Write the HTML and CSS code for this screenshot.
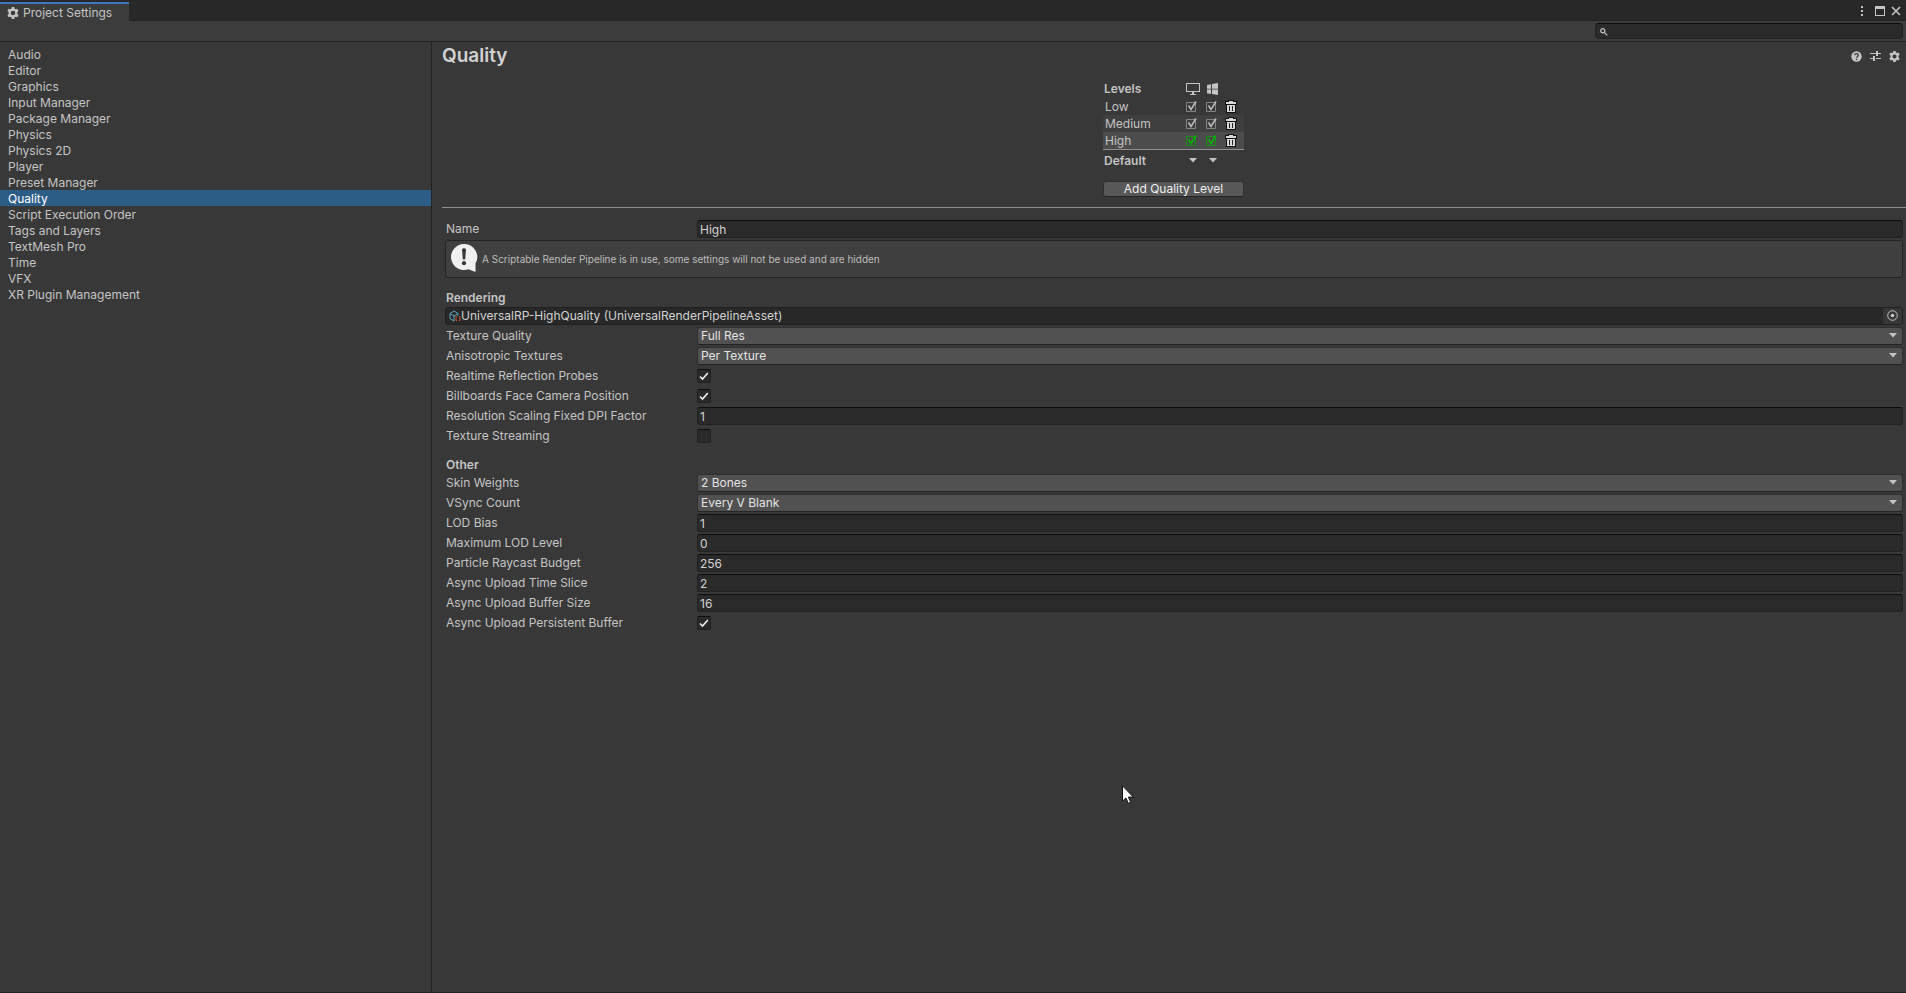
FILE: index.html
```html
<!DOCTYPE html>
<html lang="en">
<head>
  <meta charset="UTF-8" />
  <meta name="viewport" content="width=device-width, initial-scale=1.0" />
  <title>Project Settings</title>
  <link rel="stylesheet" href="styles.css">
</head>
<body>
  <!-- Shared icons -->
  <svg class="sprite" aria-hidden="true">
    <symbol id="gear" viewBox="0 0 24 24">
      <path fill-rule="evenodd" d="M9.5 0h5l.7 3.3 2.3 1.3 3.2-1.1 2.5 4.3-2.5 2.3v3.8l2.5 2.3-2.5 4.3-3.2-1.1-2.3 1.3-.7 3.3h-5l-.7-3.3-2.3-1.3-3.2 1.1-2.5-4.3 2.5-2.3v-3.8L.8 7.800l2.500-4.300 3.200 1.100 2.300-1.300zM12 7.500a4.500 4.500 0 1 0 0 9 4.500 4.500 0 0 0 0-9z" />
    </symbol>
    <symbol id="trash" viewBox="0 0 12 13">
      <path fill="#111" d="M3 0h6v1h3v4h-1v8H1V5H0V1h3z" />
      <path fill="#d8d8d8" d="M4 1h4v1h3v2H1V2h3zM2 5h8v7H2z" />
      <path fill="#222" d="M4 6h1v5H4zM7 6h1v5H7z" />
    </symbol>
  </svg>

  <header class="tabbar">
    <div class="tab">
      <svg class="tab-icon"><use href="#gear" /></svg>
      <span>Project Settings</span>
    </div>
    <div class="window-buttons">
      <button aria-label="Menu"><svg width="11" height="11"><path d="M3 0h2v2H3zM3 4h2v2H3zM3 8h2v2H3z" /></svg></button>
      <button aria-label="Maximize"><svg width="11" height="11"><path fill-rule="evenodd" d="M1 0h10v10H1zM2 3v6h8V3z" /></svg></button>
      <button aria-label="Close"><svg width="11" height="11"><path d="M2 1l8 8M10 1l-8 8" fill="none" stroke="#c4c4c4" stroke-width="1.600" /></svg></button>
    </div>
  </header>

  <div class="toolbar">
    <input class="search" type="search" aria-label="Search settings">
  </div>

  <div class="content">
    <nav class="sidebar">
      <a href="#">Audio</a>
      <a href="#">Editor</a>
      <a href="#">Graphics</a>
      <a href="#">Input Manager</a>
      <a href="#">Package Manager</a>
      <a href="#">Physics</a>
      <a href="#">Physics 2D</a>
      <a href="#">Player</a>
      <a href="#">Preset Manager</a>
      <a href="#" class="active">Quality</a>
      <a href="#">Script Execution Order</a>
      <a href="#">Tags and Layers</a>
      <a href="#">TextMesh Pro</a>
      <a href="#">Time</a>
      <a href="#">VFX</a>
      <a href="#">XR Plugin Management</a>
    </nav>

    <main class="panel">
      <div class="panel-header">
        <h1>Quality</h1>
        <div class="panel-buttons">
          <button aria-label="Help"><svg width="11" height="11"><circle cx="5.500" cy="5.500" r="5.200" /><path d="M3.700 4.300c0-2.400 3.600-2.300 3.600 0 0 1.200-1.700 1.200-1.700 2.500M5.600 7.800v1.200" fill="none" stroke="#383838" stroke-width="1.300" /></svg></button>
          <button aria-label="Presets"><svg width="11" height="11"><path d="M0 2h6v1H0zM6 0h2v5H6zM8 2h3v1H8zM0 7h3v1H0zM3 5h2v5H3zM6 7h5v1H6z" /></svg></button>
          <button aria-label="Settings"><svg width="11" height="11"><use href="#gear" /></svg></button>
        </div>
      </div>

      <div class="levels">
        <table>
          <thead>
            <tr>
              <th>Levels</th>
              <th><svg width="14" height="12" role="img" aria-label="Standalone"><path fill-rule="evenodd" d="M0 0h14v9H8v2h2v1H4v-1h2V9H0zM1 1v7h12V1z" /></svg></th>
              <th><svg width="14" height="12" role="img" aria-label="Windows"><path d="M1 2l4-.8v4.500H1zM6 1l6-1v5.700H6zM1 6.500h4V11l-4-.8zM6 6.500h6V12l-6-1z" /></svg></th>
              <th></th>
            </tr>
          </thead>
          <tbody>
            <tr>
              <td>Low</td>
              <td><input type="checkbox" aria-label="Low, standalone" checked></td>
              <td><input type="checkbox" aria-label="Low, Windows" checked></td>
              <td><button aria-label="Delete Low"><svg width="12" height="13"><use href="#trash" /></svg></button></td>
            </tr>
            <tr class="even">
              <td>Medium</td>
              <td><input type="checkbox" aria-label="Medium, standalone" checked></td>
              <td><input type="checkbox" aria-label="Medium, Windows" checked></td>
              <td><button aria-label="Delete Medium"><svg width="12" height="13"><use href="#trash" /></svg></button></td>
            </tr>
            <tr class="selected">
              <td>High</td>
              <td><input type="checkbox" aria-label="High, standalone" checked></td>
              <td><input type="checkbox" aria-label="High, Windows" checked></td>
              <td><button aria-label="Delete High"><svg width="12" height="13"><use href="#trash" /></svg></button></td>
            </tr>
          </tbody>
          <tfoot>
            <tr>
              <th>Default</th>
              <td><button aria-label="Default for standalone"><svg width="14" height="5"><path d="M3 0h8L7 4.500z" /></svg></button></td>
              <td><button aria-label="Default for Windows"><svg width="14" height="5"><path d="M3 0h8L7 4.500z" /></svg></button></td>
              <td></td>
            </tr>
          </tfoot>
        </table>
        <button class="add-level">Add Quality Level</button>
      </div>

      <form class="settings">
        <div class="row">
          <label for="name">Name</label>
          <input id="name" type="text" value="High">
        </div>
        <div class="help-box">
          <svg width="27" height="29"><path fill="#f0f0f0" d="M13 0a13 13 0 1 0 4.500 25.200L24.500 28V19.500A13 13 0 0 0 13 0z" /><path fill="#383838" d="M11 5q2-1.500 4 0l-.8 10.500h-2.400z" /><circle fill="#383838" cx="13" cy="19.200" r="2.100" /></svg>
          <p>A Scriptable Render Pipeline is in use, some settings will not be used and are hidden</p>
        </div>

        <h2>Rendering</h2>
        <div class="object-field">
          <svg width="12" height="12"><path fill="none" stroke="#5fa8c4" d="M5 11L1 8.500V3.500L5 1l4 2.500v2M1 3.500L5 6l4-2.500M5 6v5" /><path fill="none" stroke="#d0512f" d="M8 6.500H7v4h1M10 6.500h1v4h-1" /></svg>
          <input type="text" aria-label="Render pipeline asset" value="UniversalRP-HighQuality (UniversalRenderPipelineAsset)" readonly>
          <button type="button" aria-label="Pick asset"><svg width="11" height="11"><circle cx="5.500" cy="5.500" r="4.800" fill="none" stroke="#c4c4c4" /><circle cx="5.500" cy="5.500" r="1.800" /></svg></button>
        </div>
        <div class="row">
          <label for="texture-quality">Texture Quality</label>
          <select id="texture-quality"><option>Full Res</option></select>
        </div>
        <div class="row">
          <label for="anisotropic">Anisotropic Textures</label>
          <select id="anisotropic"><option>Per Texture</option></select>
        </div>
        <div class="row">
          <label for="reflection">Realtime Reflection Probes</label>
          <input id="reflection" type="checkbox" checked>
        </div>
        <div class="row">
          <label for="billboards">Billboards Face Camera Position</label>
          <input id="billboards" type="checkbox" checked>
        </div>
        <div class="row">
          <label for="dpi">Resolution Scaling Fixed DPI Factor</label>
          <input id="dpi" type="text" value="1">
        </div>
        <div class="row">
          <label for="streaming">Texture Streaming</label>
          <input id="streaming" type="checkbox">
        </div>

        <h2>Other</h2>
        <div class="row">
          <label for="skin">Skin Weights</label>
          <select id="skin"><option>2 Bones</option></select>
        </div>
        <div class="row">
          <label for="vsync">VSync Count</label>
          <select id="vsync"><option>Every V Blank</option></select>
        </div>
        <div class="row">
          <label for="lod-bias">LOD Bias</label>
          <input id="lod-bias" type="text" value="1">
        </div>
        <div class="row">
          <label for="lod-max">Maximum LOD Level</label>
          <input id="lod-max" type="text" value="0">
        </div>
        <div class="row">
          <label for="raycast">Particle Raycast Budget</label>
          <input id="raycast" type="text" value="256">
        </div>
        <div class="row">
          <label for="time-slice">Async Upload Time Slice</label>
          <input id="time-slice" type="text" value="2">
        </div>
        <div class="row">
          <label for="buffer-size">Async Upload Buffer Size</label>
          <input id="buffer-size" type="text" value="16">
        </div>
        <div class="row">
          <label for="persistent">Async Upload Persistent Buffer</label>
          <input id="persistent" type="checkbox" checked>
        </div>
      </form>
    </main>
  </div>

  <svg class="cursor" width="12" height="19" aria-hidden="true"><path fill="#fff" stroke="#111" d="M.5.800v15.400l3.400-3.200 2.400 5.300 2.400-1-2.300-5.200h4.900z" /></svg>
</body>
</html>
```
FILE: styles.css
```css
* {
  box-sizing: border-box;
}
body {
  margin: 0;
  min-height: 100vh;
  display: flex;
  flex-direction: column;
  background: #383838;
  color: #c4c4c4;
  font: 12px/18px Inter, sans-serif;
  border-bottom: 1px solid #232323;
}
svg {
  display: block;
  fill: #c4c4c4;
}
button {
  padding: 0;
  border: none;
  background: none;
  color: inherit;
  font: inherit;
}
.sprite {
  position: absolute;
  width: 0;
  height: 0;
}

/* Window chrome */
.tabbar {
  display: flex;
  justify-content: space-between;
  height: 21px;
  padding-top: 2px;
  background: #282828;
  border-bottom: 1px solid #232323;
}
.tab {
  display: flex;
  align-items: center;
  gap: 4px;
  height: 19px;
  padding: 0 17px 0 7px;
  background: #3c3c3c;
  border-top: 2px solid #3a79bb;
}
.tab-icon {
  width: 12px;
  height: 12px;
}
.window-buttons {
  display: flex;
  align-items: center;
  gap: 5px;
  padding-right: 5px;
}
.toolbar {
  display: flex;
  justify-content: flex-end;
  height: 21px;
  padding: 2px 3px;
  background: #3c3c3c;
  border-bottom: 1px solid #232323;
}
.search {
  appearance: none;
  width: 308px;
  height: 16px;
  margin: 0;
  padding: 0 16px;
  border: 1px solid #212121;
  border-top-color: #0d0d0d;
  border-radius: 4px;
  color: #d2d2d2;
  font: inherit;
  background: #2a2a2a url("data:image/svg+xml,%3Csvg xmlns='http://www.w3.org/2000/svg' width='8' height='8' fill='none' stroke='%23c4c4c4' stroke-width='1.2'%3E%3Ccircle cx='2.800' cy='2.800' r='2.100'/%3E%3Cpath d='M4.300 4.300l3 3'/%3E%3C/svg%3E") no-repeat 4px 4px;
}

.content {
  flex: 1;
  display: flex;
}

/* Category list */
.sidebar {
  flex: none;
  width: 432px;
  padding-top: 4px;
  border-right: 1px solid #232323;
}
.sidebar a {
  display: block;
  padding: 1px 0 0 8px;
  color: inherit;
  line-height: 15px;
  text-decoration: none;
}
.sidebar .active {
  background: #2c5d87;
  color: #fff;
}

/* Settings panel */
.panel {
  flex: 1;
  padding-left: 10px;
}
.panel-header {
  display: flex;
  justify-content: space-between;
  align-items: center;
  height: 28px;
  padding-right: 6px;
}
h1 {
  margin: 0;
  color: #d2d2d2;
  font-size: 19px;
  font-weight: 600;
  line-height: 28px;
}
.panel-buttons {
  display: flex;
  gap: 8px;
}

.levels {
  display: flex;
  flex-direction: column;
  align-items: center;
  gap: 10px;
  padding: 10px 1px 10px 0;
  border-bottom: 1px solid #8f8f8f;
}
.levels table {
  width: 141px;
  table-layout: fixed;
  border-collapse: collapse;
  line-height: 17px;
  text-align: left;
}
.levels tr {
  height: 17px;
}
.levels th,
.levels td {
  width: 20px;
  padding: 0 0 0 3px;
}
.levels th {
  font-weight: 600;
}
.levels th:first-child {
  width: 80px;
  padding-left: 1px;
}
.levels th:last-child {
  width: 21px;
}
.levels td:first-child {
  padding-left: 2px;
}
.levels td:last-child {
  padding-left: 2px;
}
.levels thead th {
  padding-bottom: 1px;
}
.levels .even {
  background: #3f3f3f;
}
.levels .selected {
  background: #4c4c4c;
  border-bottom: 1px solid #8f8f8f;
}
.levels tfoot tr {
  height: 21px;
}
.levels td input {
  appearance: none;
  display: block;
  width: 12px;
  height: 12px;
  margin: 0;
  background: url("data:image/svg+xml,%3Csvg xmlns='http://www.w3.org/2000/svg' width='12' height='12' fill='none'%3E%3Cpath stroke='%23858585' d='M.5 1.500h9v9h-9z'/%3E%3Cpath stroke='%23b8b8b8' stroke-width='1.600' d='M2.500 4.500l2.500 4L10 .5'/%3E%3C/svg%3E") no-repeat;
}
.levels .selected input {
  background-image: url("data:image/svg+xml,%3Csvg xmlns='http://www.w3.org/2000/svg' width='12' height='12' fill='none'%3E%3Cpath stroke='%23129412' d='M.5 1.500h9v9h-9z'/%3E%3Cpath stroke='%2300b400' stroke-width='1.600' d='M2.500 4.500l2.500 4L10 .5'/%3E%3C/svg%3E");
}
.levels td button {
  display: block;
}
.add-level {
  width: 141px;
  height: 16px;
  line-height: 14px;
  background: #585858;
  border: 1px solid #303030;
  border-bottom-color: #242424;
  border-radius: 3px;
  color: #eee;
}

.settings {
  padding: 12px 3px 0 3px;
}
h2 {
  margin: 11px 0 0;
  padding-left: 1px;
  font-size: 12px;
  font-weight: 600;
}
.row {
  display: flex;
  align-items: center;
  height: 18px;
  margin-bottom: 2px;
}
.row label {
  flex: none;
  width: 252px;
  padding: 1px 0 0 1px;
}
.row input[type="text"],
.row select {
  appearance: none;
  flex: 1;
  min-width: 0;
  height: 18px;
  margin: 0;
  border: 1px solid #212121;
  border-radius: 3px;
  font: inherit;
  line-height: 16px;
}
.row input[type="text"] {
  padding: 1px 2px 0;
  background: #2a2a2a;
  border-top-color: #0d0d0d;
  color: #d2d2d2;
}
.row select {
  padding: 0 20px 1px 3px;
  border-color: #303030;
  border-bottom-color: #242424;
  color: #e4e4e4;
  background: #515151 url("data:image/svg+xml,%3Csvg xmlns='http://www.w3.org/2000/svg' width='8' height='5'%3E%3Cpath fill='%23c4c4c4' d='M0 0h8L4 4.500z'/%3E%3C/svg%3E") no-repeat right 5px center;
}
.row input[type="checkbox"] {
  appearance: none;
  width: 14px;
  height: 14px;
  margin: 0;
  border: 1px solid #212121;
  border-top-color: #0d0d0d;
  border-radius: 2px;
  background: #2a2a2a;
}
.row input[type="checkbox"]:checked {
  background-image: url("data:image/svg+xml,%3Csvg xmlns='http://www.w3.org/2000/svg' width='12' height='12'%3E%3Cpath fill='none' stroke='%23eee' stroke-width='1.600' d='M2 6.500L4.500 9l5.300-6'/%3E%3C/svg%3E");
}

.help-box {
  display: flex;
  align-items: center;
  gap: 4px;
  height: 38px;
  padding-left: 5px;
  background: #404040;
  border: 1px solid #232323;
  border-radius: 3px;
}
.help-box p {
  margin: 0;
  color: #bdbdbd;
  font-size: 10px;
}
.object-field {
  display: flex;
  align-items: center;
  height: 18px;
  margin-bottom: 2px;
  padding-left: 3px;
  background: #282828;
  border: 1px solid #202020;
  border-radius: 3px;
}
.object-field input {
  flex: 1;
  min-width: 0;
  height: 16px;
  padding: 1px 0 0;
  border: none;
  background: none;
  color: #d2d2d2;
  font: inherit;
}
.object-field button {
  display: flex;
  align-items: center;
  height: 16px;
  padding: 0 4px;
  background: #373737;
}

.cursor {
  position: fixed;
  left: 1122px;
  top: 785px;
}
```
